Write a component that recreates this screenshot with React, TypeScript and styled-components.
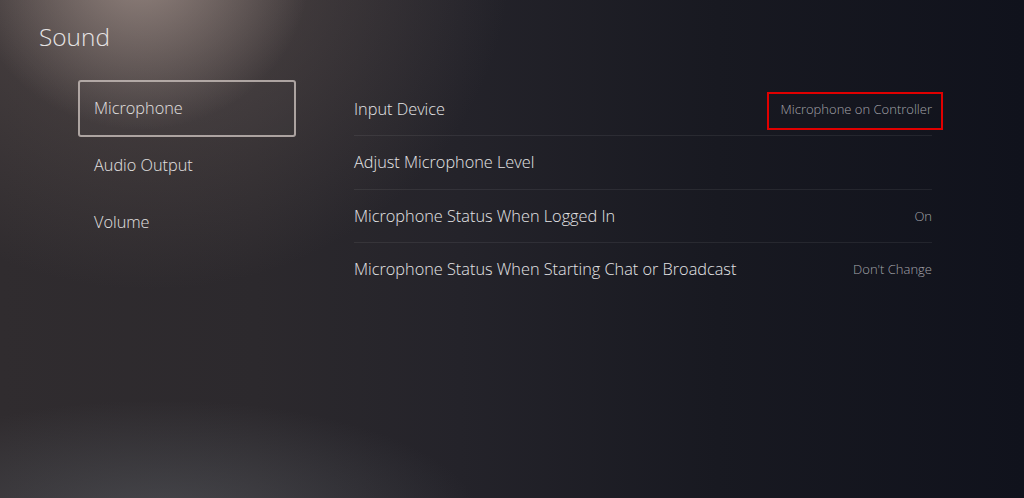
import React from "react";
import styled, { createGlobalStyle } from "styled-components";

const GlobalStyle = createGlobalStyle`
  html, body {
    margin: 0;
    padding: 0;
    background: #14151d;
  }
  * { box-sizing: border-box; }
`;

const Screen = styled.div`
  width: 1024px;
  height: 498px;
  overflow: hidden;
  font-family: "Open Sans", "Noto Sans", sans-serif;
  font-weight: 300;
  color: #e4e4e6;
  background:
    radial-gradient(ellipse 170px 160px at 140px -30px, rgba(156, 140, 134, 0.85), rgba(156, 140, 134, 0) 100%),
    radial-gradient(ellipse 360px 330px at 150px -40px, rgba(110, 96, 92, 0.55), rgba(110, 96, 92, 0) 100%),
    radial-gradient(ellipse 320px 120px at 160px 520px, rgba(96, 100, 106, 0.5), rgba(96, 100, 106, 0) 100%),
    linear-gradient(90deg, #302c2f 0%, #2c292d 25%, #24232a 45%, #181921 70%, #10121c 100%);
`;

const Title = styled.h1`
  margin: 0;
  padding: 20px 0 0 39px;
  font-size: 24.4px;
  font-weight: 300;
  line-height: 34px;
  color: #e6e4e4;
`;

const Body = styled.div`
  display: grid;
  grid-template-columns: 218px 578px;
  column-gap: 58px;
  padding: 26px 0 0 78px;
`;

const Menu = styled.nav`
  display: flex;
  flex-direction: column;
`;

const MenuItem = styled.div<{ $active?: boolean }>`
  height: 57px;
  display: flex;
  align-items: center;
  padding: 0 0 1px 14px;
  font-size: 16.3px;
  color: #e2e0e0;
  border: 2px solid ${(p) => (p.$active ? "rgba(200, 190, 186, 0.8)" : "transparent")};
  border-radius: 3px;
  background: ${(p) => (p.$active ? "rgba(255, 255, 255, 0.02)" : "transparent")};
`;

const List = styled.div`
  display: flex;
  flex-direction: column;
  padding-top: 2.5px;
`;

const Row = styled.div<{ $last?: boolean }>`
  height: ${(p) => (p.$last ? "52.5px" : "53.5px")};
  display: flex;
  align-items: center;
  justify-content: space-between;
  border-bottom: 1px solid ${(p) => (p.$last ? "transparent" : "rgba(255, 255, 255, 0.07)")};
`;

const Label = styled.span`
  font-size: 16.3px;
  color: #e4e4e6;
`;

const Value = styled.span<{ $marked?: boolean }>`
  position: relative;
  font-size: 13px;
  color: #a4a4aa;

  ${(p) =>
    p.$marked &&
    `
    &::after {
      content: "";
      position: absolute;
      left: -14px;
      right: -11px;
      top: -8px;
      bottom: -12px;
      border: 2.5px solid #e00000;
    }
  `}
`;

const items = ["Microphone", "Audio Output", "Volume"];

const settings = [
  { label: "Input Device", value: "Microphone on Controller", marked: true },
  { label: "Adjust Microphone Level", value: "" },
  { label: "Microphone Status When Logged In", value: "On" },
  { label: "Microphone Status When Starting Chat or Broadcast", value: "Don't Change" },
];

export default function App() {
  return (
    <Screen>
      <GlobalStyle />
      <Title>Sound</Title>
      <Body>
        <Menu>
          {items.map((item, i) => (
            <MenuItem key={item} $active={i === 0}>
              {item}
            </MenuItem>
          ))}
        </Menu>
        <List>
          {settings.map((s, i) => (
            <Row key={s.label} $last={i === settings.length - 1}>
              <Label>{s.label}</Label>
              {s.value && <Value $marked={s.marked}>{s.value}</Value>}
            </Row>
          ))}
        </List>
      </Body>
    </Screen>
  );
}
